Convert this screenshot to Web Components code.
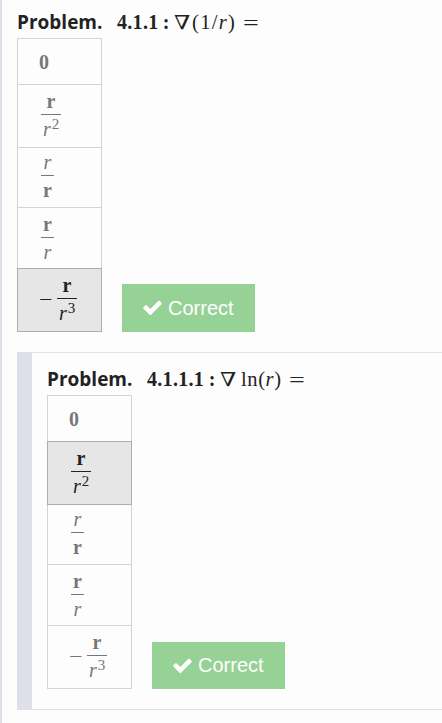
<!DOCTYPE html>
<html lang="en">
<head>
<meta charset="utf-8">
<title>Problem 4.1.1</title>
<style>
  html, body {
    margin: 0;
    height: 100%;
    overflow: hidden;
    background: #fdfdfd;
  }
</style>
</head>
<body>
<exercise-problem>
  <problem-title slot="title" number="4.1.1" w="41"><math-run w="44" lead="1" spacing="1.3">(1/<i>r</i>)</math-run></problem-title>
  <choice-list slot="choices" selected="4"></choice-list>
  <exercise-problem slot="sub" nested>
    <problem-title slot="title" number="4.1.1.1" w="57"><math-run w="41" lead="4" spacing=".6">ln(<i>r</i>)</math-run></problem-title>
    <choice-list slot="choices" selected="1" style="--button:47px"></choice-list>
  </exercise-problem>
</exercise-problem>

<script>
const define = (name, html, setup) => {
  const template = document.createElement('template');
  template.innerHTML = html;

  customElements.define(name, class extends HTMLElement {
    constructor() {
      super();
      this.attachShadow({ mode: 'open' });
      this.shadowRoot.appendChild(template.content.cloneNode(true));
    }

    connectedCallback() {
      if (setup) setup(this, this.shadowRoot);
    }
  });
};

define('math-run', `
  <style>
    :host {
      display: inline-block;
      white-space: nowrap;
      font: 20.5px/24px "Liberation Serif", serif;
    }
  </style>
  <slot></slot>
`, (host) => {
  host.style.width = host.getAttribute('w') + 'px';
  host.style.marginLeft = host.getAttribute('lead') + 'px';
  host.style.letterSpacing = host.getAttribute('spacing') + 'px';
});

define('problem-title', `
  <style>
    :host {
      display: flex;
      align-items: baseline;
      height: 29px;
      color: #222;
      white-space: nowrap;
      font: 20px/26px "Liberation Serif", serif;
    }
    .label {
      width: 100px;
      font: 700 19px/26px "Open Sans", sans-serif;
    }
    .number { font-weight: bold; letter-spacing: .3px; }
    .colon { width: 16px; text-align: center; font-weight: bold; }
    .nabla {
      width: 17px;
      font: 19.5px/24px "DejaVu Serif", serif;
      transform: scaleX(1.2);
      transform-origin: left;
    }
    .equals {
      margin-left: 7px;
      transform: translateY(1px) scaleX(1.4);
      transform-origin: left;
    }
  </style>
  <span class="label">Problem.</span>
  <span class="number"></span>
  <span class="colon">:</span>
  <span class="nabla">∇</span>
  <slot></slot>
  <span class="equals">=</span>
`, (host, root) => {
  const number = root.querySelector('.number');
  number.textContent = host.getAttribute('number');
  number.style.width = host.getAttribute('w') + 'px';
});

define('math-fraction', `
  <style>
    :host {
      display: inline-flex;
      flex-direction: column;
      align-items: center;
      font: 20px/20px "Liberation Serif", serif;
    }
    .num, .den { height: 20px; white-space: nowrap; }
    .bar {
      width: 100%;
      height: 1px;
      background: currentColor;
      margin: 3px 0 4px;
    }
    ::slotted(*) { padding: 0 2px; }
  </style>
  <div class="num"><slot name="num"></slot></div>
  <div class="bar"></div>
  <div class="den"><slot name="den"></slot></div>
`);

define('choice-item', `
  <style>
    :host {
      display: flex;
      align-items: flex-start;
      box-sizing: border-box;
      width: 85px;
      height: var(--h);
      margin-bottom: -1px;
      padding: var(--top, 6px) 0 0 23px;
      border: 1px solid #d3d3d3;
      color: #777;
      font: 20px/20px "Liberation Serif", serif;
    }
    :host([selected]) {
      position: relative;
      color: #222;
      background: #e6e6e6;
      border-color: #adadad;
    }
  </style>
  <slot></slot>
`);

define('correct-button', `
  <style>
    :host {
      display: flex;
      align-items: center;
      box-sizing: border-box;
      width: 133px;
      height: var(--button, 48px);
      padding: 0 0 1px 21px;
      gap: 6px;
      color: #fff;
      background: #96d196;
      font: 20px/24px "Liberation Sans", Arial, sans-serif;
    }
    svg { display: block; fill: currentColor; }
  </style>
  <svg width="19" height="15" viewBox="121 270 1550 1252">
    <path d="M1671 566q0 40-28 68l-724 724-136 136q-28 28-68 28t-68-28l-136-136-362-362q-28-28-28-68t28-68l136-136q28-28 68-28t68 28l294 295 656-657q28-28 68-28t68 28l136 136q28 28 28 68z"/>
  </svg>
  <span>Correct</span>
`);

define('choice-list', `
  <style>
    :host { display: flex; align-items: flex-end; gap: 20px; }
    .items { display: flex; flex-direction: column; }
    choice-item:last-child { margin-bottom: 0; }
    .r { display: inline-block; width: 9px; text-align: center; }
    .pow { display: inline-block; width: 16px; text-align: left; }
    sup { font-size: 15px; line-height: 0; vertical-align: 7px; margin-left: 1px; }
    .sign { width: 18px; margin: 14px 0 0 -2px; transform: scaleX(1.2); transform-origin: left; }
    .zero { margin-left: -2px; }
  </style>
  <div class="items">
    <choice-item style="--h:47px; --top:13px"><b class="zero">0</b></choice-item>
    <choice-item style="--h:64px">
      <math-fraction><b class="r" slot="num">r</b><span class="pow" slot="den"><i>r</i><sup>2</sup></span></math-fraction>
    </choice-item>
    <choice-item style="--h:61px; --top:4px">
      <math-fraction><i class="r" slot="num">r</i><b class="r" slot="den">r</b></math-fraction>
    </choice-item>
    <choice-item style="--h:62px">
      <math-fraction><b class="r" slot="num">r</b><i class="r" slot="den">r</i></math-fraction>
    </choice-item>
    <choice-item style="--h:64px">
      <span class="sign">−</span>
      <math-fraction><b class="r" slot="num">r</b><span class="pow" slot="den"><i>r</i><sup>3</sup></span></math-fraction>
    </choice-item>
  </div>
  <correct-button></correct-button>
`, (host, root) => {
  const items = root.querySelectorAll('choice-item');
  items[host.getAttribute('selected')].setAttribute('selected', '');
});

define('exercise-problem', `
  <style>
    :host {
      display: block;
      box-sizing: border-box;
      height: 723px;
      padding: 9px 0 0 15px;
      border-left: 2px solid #dfdeeb;
    }
    :host([nested]) {
      height: 358px;
      margin-top: 20px;
      padding: 13px 0 0 15px;
      border: solid #dfdeeb;
      border-width: 1px 0 1px 15px;
    }
  </style>
  <slot name="title"></slot>
  <slot name="choices"></slot>
  <slot name="sub"></slot>
`);
</script>
</body>
</html>
